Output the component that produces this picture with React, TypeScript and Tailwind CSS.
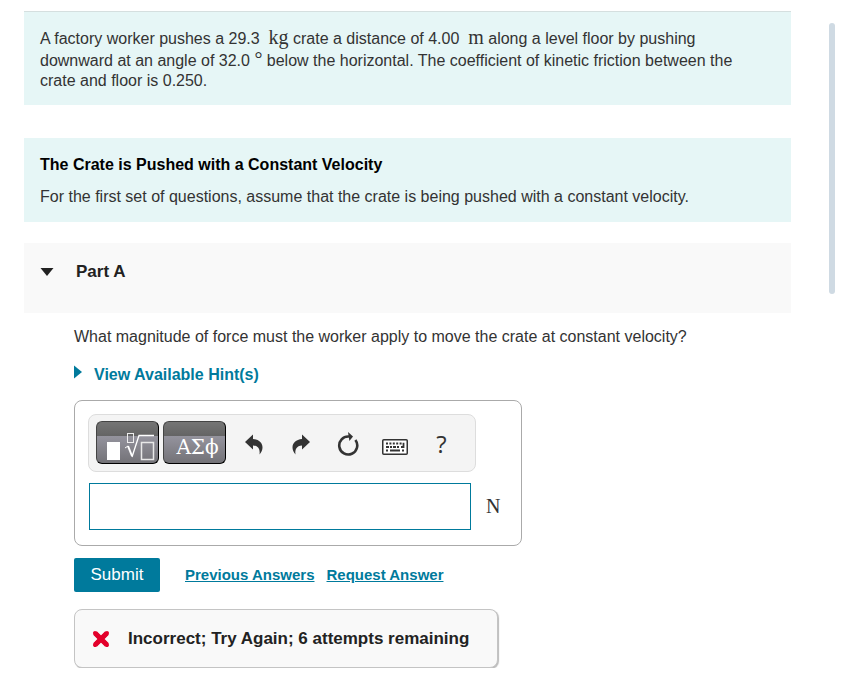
import React from 'react';
import clsx from 'clsx';

const Unit: React.FC<{ children: string }> = ({ children }) => (
    <span className="font-['Liberation_Serif',serif] text-xl leading-5">{children}</span>
);

const UndoArrow: React.FC<{ flipped?: boolean }> = ({ flipped = false }) => (
    <svg
        width="18"
        height="21"
        viewBox="0 0 18 21"
        fill="#333"
        className={clsx(flipped && '-scale-x-100')}
        aria-hidden="true"
    >
        <path d="M0 8 L8 0.5 V5 C14 5.5 17.5 9 17.5 13.5 C17.5 16 16.5 18 14.5 20.5 C15.2 15.5 13.5 11.8 8 11.5 V15.5 Z" />
    </svg>
);

const ResetIcon = () => (
    <svg width="22" height="24" viewBox="0 0 22 24" aria-hidden="true">
        <path d="M12 4.5 A9 9 0 1 0 18.4 8" fill="none" stroke="#333" strokeWidth="2.6" />
        <path d="M11 0 L16 4.4 L12.4 9 Z" fill="#333" />
    </svg>
);

const KeyboardIcon = () => (
    <svg width="26" height="16" viewBox="0 0 26 16" aria-hidden="true">
        <rect x="0.75" y="0.75" width="24.5" height="14.5" rx="1" fill="#fff" stroke="#333" strokeWidth="1.5" />
        <path d="M4 4.5 H20" stroke="#333" strokeWidth="1.8" strokeDasharray="2 1.4" />
        <path d="M4 8 H18" stroke="#333" strokeWidth="1.8" strokeDasharray="3 1 2 1" />
        <path d="M21.5 3.7 V8 H19" fill="none" stroke="#333" strokeWidth="1.8" />
        <path d="M4 11.5 H6 M8 11.5 H18 M20 11.5 H22" stroke="#333" strokeWidth="1.8" />
    </svg>
);

const TemplateIcon = () => (
    <svg width="49" height="28" viewBox="0 0 49 28" fill="none" aria-hidden="true">
        <rect x="1" y="9" width="13" height="18" fill="#fff" />
        <rect x="21.5" y="0.5" width="6" height="9" stroke="#eee" />
        <path d="M19 15 L22 13" stroke="#fff" />
        <path d="M22 13 L26 23" stroke="#fff" strokeWidth="2" />
        <path d="M26 24 L33 2.5 H48" stroke="#fff" strokeWidth="1.3" />
        <rect x="35.5" y="9.5" width="12" height="17" stroke="#e8e8e8" strokeWidth="1.5" />
    </svg>
);

const CrossIcon = () => (
    <svg width="18" height="18" viewBox="0 0 18 18" aria-hidden="true">
        <path d="M3 3 L15 15 M15 3 L3 15" stroke="#e3002b" strokeWidth="5.2" strokeLinecap="butt" />
        <path d="M3 3 L15 15 M15 3 L3 15" stroke="#e3002b" strokeWidth="4" strokeLinecap="round" />
    </svg>
);

interface ButtonProps {
    label: string;
    children: React.ReactNode;
}

const PaletteButton: React.FC<ButtonProps> = ({ label, children }) => (
    <button
        type="button"
        aria-label={label}
        className="flex h-[43px] w-[63px] items-end justify-center rounded-md border border-[#444] border-r-black border-b-black bg-[linear-gradient(180deg,#757575_0%,#646464_34%,#94939d_35%,#737277_100%)] text-white"
    >
        {children}
    </button>
);

const ToolButton: React.FC<ButtonProps> = ({ label, children }) => (
    <button type="button" aria-label={label} className="flex h-[46px] w-[47px] items-center justify-center">
        {children}
    </button>
);

export default function App() {
    return (
        <div className="flex items-start bg-white pt-[11px] font-['Liberation_Sans',Arial,sans-serif] text-base leading-5 text-[#333]">
            <main className="min-w-0 flex-1 pl-6">
                <section className="border-t border-[#d5dfdf] bg-[#e6f6f6] pt-[15px] pr-10 pb-3.5 pl-4">
                    <p>
                        A factory worker pushes a 29.3 &nbsp;<Unit>kg</Unit> crate a distance of 4.00 &nbsp;<Unit>m</Unit>{' '}
                        along a level floor by pushing downward at an angle of 32.0 <Unit>°</Unit> below the horizontal. The
                        coefficient of kinetic friction between the crate and floor is 0.250.
                    </p>
                </section>

                <section className="mt-[33px] bg-[#e6f6f6] px-4 pt-[17px] pb-[15px]">
                    <h2 className="font-bold text-black">The Crate is Pushed with a Constant Velocity</h2>
                    <p className="mt-3">
                        For the first set of questions, assume that the crate is being pushed with a constant velocity.
                    </p>
                </section>

                <section className="mt-[21px]">
                    <header className="flex h-[70px] items-start bg-[#f9f9f9] px-4 pt-[19px]">
                        <button type="button" className="flex items-center gap-[22px] text-[17px] font-bold text-[#222]">
                            <svg width="14" height="8" viewBox="0 0 14 8" fill="#222" aria-hidden="true">
                                <path d="M0.5 0 H13.5 L7 8 Z" />
                            </svg>
                            Part A
                        </button>
                    </header>

                    <div className="pt-3.5 pl-[50px]">
                        <p>What magnitude of force must the worker apply to move the crate at constant velocity?</p>

                        <a href="#hints" className="mt-[18px] flex items-start gap-3 font-bold text-[#007a9c]">
                            <svg width="8" height="14" viewBox="0 0 8 14" fill="#007a9c" aria-hidden="true">
                                <path d="M0 0.5 L8 7 L0 13.5 Z" />
                            </svg>
                            View Available Hint(s)
                        </a>

                        <form>
                            <div className="mt-[15px] w-fit rounded-lg border border-[#aaa] p-[13px] pb-[15px]">
                                <div className="flex h-[58px] w-[388px] items-start rounded-lg border border-[#ddd] bg-[#f4f4f4] px-[7px] pt-1.5">
                                    <div className="mr-1 flex gap-1">
                                        <PaletteButton label="Templates">
                                            <div className="pb-0.5 pl-1.5">
                                                <TemplateIcon />
                                            </div>
                                        </PaletteButton>
                                        <PaletteButton label="Symbols">
                                            <span className="pb-1 pl-1.5 font-['DejaVu_Serif',serif] text-xl leading-6">ΑΣϕ</span>
                                        </PaletteButton>
                                    </div>
                                    <ToolButton label="Undo">
                                        <UndoArrow />
                                    </ToolButton>
                                    <ToolButton label="Redo">
                                        <UndoArrow flipped />
                                    </ToolButton>
                                    <ToolButton label="Reset">
                                        <ResetIcon />
                                    </ToolButton>
                                    <ToolButton label="Keyboard shortcuts">
                                        <span className="pt-1.5">
                                            <KeyboardIcon />
                                        </span>
                                    </ToolButton>
                                    <ToolButton label="Help">
                                        <span className="font-['Open_Sans',sans-serif] text-2xl leading-6">?</span>
                                    </ToolButton>
                                </div>
                                <div className="mt-[11px] flex items-center gap-[15px] pl-px">
                                    <input
                                        type="text"
                                        aria-label="Force magnitude in newtons"
                                        className="h-[47px] w-[382px] border border-[#007a9c] bg-white px-2 outline-none"
                                    />
                                    <span className="pr-2">
                                        <Unit>N</Unit>
                                    </span>
                                </div>
                            </div>

                            <div className="mt-3 flex items-center text-[15px] font-bold text-[#007a9c]">
                                <button
                                    type="submit"
                                    className="mr-[25px] h-[34px] w-[86px] rounded-xs bg-[#007a9c] text-[17px] font-normal text-white"
                                >
                                    Submit
                                </button>
                                <a href="#previous" className="mr-3 underline">
                                    Previous Answers
                                </a>
                                <a href="#request" className="underline">
                                    Request Answer
                                </a>
                            </div>
                        </form>

                        <div
                            role="status"
                            className="mt-[17px] flex h-[59px] w-fit items-center gap-[18px] rounded-lg border border-[#c4c4c4] bg-[#f9f9f9] pr-7 pl-[17px] text-[17px] font-bold text-[#222] shadow-[1px_1px_1px_#bbb]"
                        >
                            <CrossIcon />
                            Incorrect; Try Again; 6 attempts remaining
                        </div>
                    </div>
                </section>
            </main>

            <div className="w-[52px] shrink-0 pt-3 pl-[38px]" aria-hidden="true">
                <div className="h-[271px] w-1.5 rounded-full bg-[#cfdae3]" />
            </div>
        </div>
    );
}
